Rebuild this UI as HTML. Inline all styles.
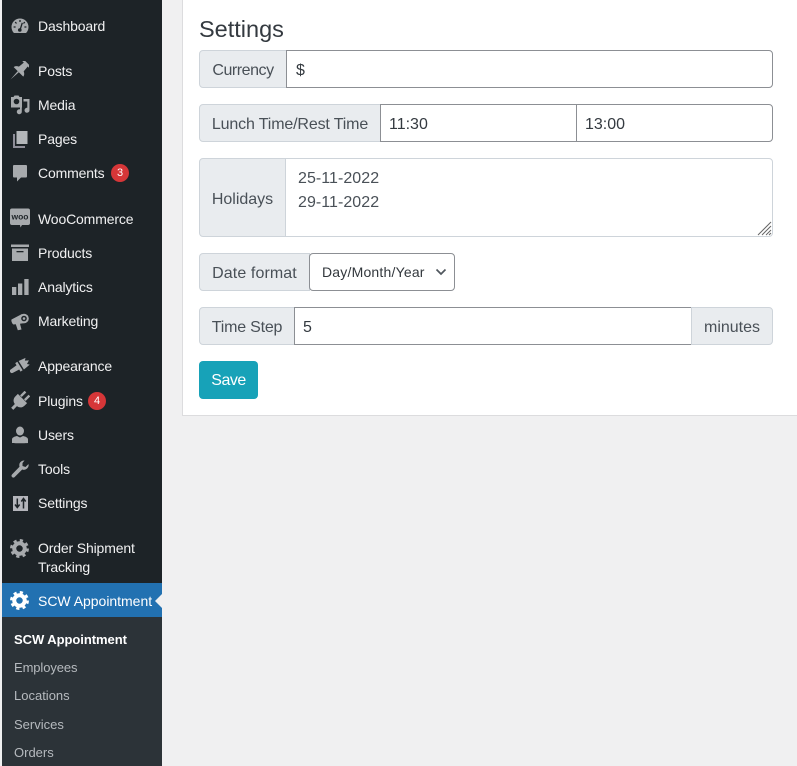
<!DOCTYPE html>
<html><head><meta charset="utf-8"><title>Settings</title>
<style>
html,body{margin:0;padding:0;width:797px;height:766px;overflow:hidden;background:#f0f0f1;font-family:"Liberation Sans",sans-serif}
.a{position:absolute;box-sizing:border-box}
#side{left:2px;top:0;width:160px;height:766px;background:#1d2327}
#sub{left:2px;top:617px;width:160px;height:149px;background:#2c3338}
#act{left:2px;top:583px;width:160px;height:34px;background:#2271b1}
#arr{left:155px;top:593px;width:0;height:0;border:8px solid transparent;border-right-color:#f0f0f1;border-left:0}
.m{position:absolute;left:38px;font-size:14px;line-height:20px;height:20px;color:#f0f0f1;white-space:nowrap;letter-spacing:-.15px}
.s{position:absolute;left:14px;font-size:13px;line-height:20px;height:20px;color:#b6babe;white-space:nowrap;letter-spacing:0}
.b{position:absolute;width:18px;height:18px;border-radius:9px;background:#d63638;color:#fff;font-size:11px;line-height:18px;text-align:center}
svg.i{position:absolute;width:20px;height:20px;fill:#a7aaad}
#panel{left:182px;top:-1px;width:616px;height:417px;background:#fff;border:1px solid #dcdcde}
h1{position:absolute;margin:0;left:199px;top:14px;font-size:23.5px;line-height:30px;font-weight:400;color:#343a40}
.add{position:absolute;box-sizing:border-box;background:#e9ecef;border:1px solid #ced4da;color:#495057;font-size:16px;display:flex;align-items:center;justify-content:center;white-space:nowrap;padding-top:4px}
.inp{position:absolute;box-sizing:border-box;background:#fff;border:1px solid #8c8f94;color:#343a40;font-size:16px;line-height:40px;white-space:nowrap}
.l{border-radius:4px 0 0 4px}.r{border-radius:0 4px 4px 0}
#btn{left:199px;top:361px;width:59px;height:38px;background:#17a2b8;border-radius:4px;color:#fff;font-size:16px;line-height:40px;text-align:center;letter-spacing:-.5px}
</style></head><body>
<div class="a" id="side"></div><div class="a" id="sub"></div><div class="a" id="act"></div><div class="a" id="arr"></div>

<svg class="i" style="left:10px;top:16px" viewBox="0 0 20 20"><path d="M10 2.500a8.500 8.500 0 0 0-8.500 8.500c0 2.300.9 4.400 2.400 6h12.200a8.500 8.500 0 0 0 2.400-6A8.500 8.500 0 0 0 10 2.500z"/><path d="M10 4v2M5.200 6l1.300 1.500M14.800 6l-1.300 1.500M3.600 11h2M14.400 11h2M12.300 6.800l-2 6.400" stroke="#1d2327" stroke-width="1.300" fill="none"/><circle cx="9.800" cy="14" r="1.800" fill="#1d2327"/></svg>
<div class="m" style="top:16px">Dashboard</div>

<svg class="i" style="left:9px;top:61px" viewBox="0 0 20 20"><g transform="rotate(45 10 10)"><path d="M5.500 -1.500h9v2.200h-1.500l.6 6.300c1.800.7 3.200 2 3.400 4H3.500c.2-2 1.600-3.300 3.400-4l.6-6.300H5.500z"/><path d="M9.200 11h1.600l-.8 11z"/></g></svg>
<div class="m" style="top:61px">Posts</div>

<svg class="i" style="left:10px;top:95px" viewBox="0 0 20 20"><path d="M1 2h2.500l1-1.500h4l1 1.500h2.500v10.500H1z"/><circle cx="6.500" cy="6.500" r="2.800" fill="#1d2327"/><path d="M13.500 4h6v11.200a2.500 2.500 0 1 1-2.200-2.400V6.500h-3.800z"/><path d="M10 11.500h1.800v5.200a2.500 2.500 0 1 1-1.800-2.400z"/></svg>
<div class="m" style="top:95px">Media</div>

<svg class="i" style="left:10px;top:129px" viewBox="0 0 20 20"><path d="M6.500 2h11v13h-11z" fill="#b4b7ba"/><path d="M3 5h2v12h10v2H3z" fill="#8f8e99"/></svg>
<div class="m" style="top:129px">Pages</div>

<svg class="i" style="left:10px;top:163px" viewBox="0 0 20 20"><path d="M4 2h12a1 1 0 0 1 1 1v10.500a1 1 0 0 1-1 1h-5l-4 4 0-4H4a1 1 0 0 1-1-1V3a1 1 0 0 1 1-1z"/></svg>
<div class="m" style="top:163px">Comments</div>
<div class="b" style="left:111px;top:164px">3</div>

<svg class="i" style="left:10px;top:208px" viewBox="0 0 20 20"><path d="M2 0.500h16a2 2 0 0 1 2 2v12.500a2 2 0 0 1-2 2h-6l-1.500 2.500L10 17H2a2 2 0 0 1-2-2V2.500a2 2 0 0 1 2-2z"/><text x="10" y="11.500" font-size="8.500" font-weight="700" text-anchor="middle" fill="#1d2327" font-family="Liberation Sans">woo</text></svg>
<div class="m" style="top:209px">WooCommerce</div>

<svg class="i" style="left:10px;top:243px" viewBox="0 0 20 20"><path d="M1 1.500h18v2.500H1zM2 5.500h16V18H2z"/><path d="M6.500 8h7v1.300h-7z" fill="#1d2327"/></svg>
<div class="m" style="top:243px">Products</div>

<svg class="i" style="left:10px;top:277px" viewBox="0 0 20 20"><path d="M2 10h4.300v8H2zM8 6.500h4.300V18H8zM14.300 2h4.300v16h-4.300z"/></svg>
<div class="m" style="top:277px">Analytics</div>

<svg class="i" style="left:10px;top:311px" viewBox="0 0 20 20"><path d="M1.500 8.500L12 3l3 9-5 .7 1.500 5.800-3.700.8-2-6.100-2.300.3c-1.500-.8-2.500-3.700-2-5z"/><circle cx="14" cy="7.500" r="4.800"/><circle cx="14" cy="7.500" r="2.800" fill="#1d2327"/><circle cx="14" cy="7.500" r="1.300"/></svg>
<div class="m" style="top:311px">Marketing</div>

<svg class="i" style="left:10px;top:356px" viewBox="0 0 20 20"><g transform="rotate(58 10 10)"><path d="M5 8.500L6 1l2 2 2-3.500 2 3.500 2-2 1 7.500z"/><path d="M5 10h10v2.500h-2.500l-.5 7a2 2 0 0 1-4 0l-.5-7H5z"/></g></svg>
<div class="m" style="top:356px">Appearance</div>

<svg class="i" style="left:10px;top:391px" viewBox="0 0 20 20"><g transform="rotate(45 10 10)"><path d="M6 -.500h2.400V6H6zM11.600 -.500H14V6h-2.400z"/><path d="M3.500 6.500h13v3.500c0 3.300-2.200 5.500-5 5.800V21h-3v-5.200c-2.800-.3-5-2.500-5-5.800z"/></g></svg>
<div class="m" style="top:391px">Plugins</div>
<div class="b" style="left:88px;top:392px">4</div>

<svg class="i" style="left:10px;top:425px" viewBox="0 0 20 20"><ellipse cx="10" cy="6" rx="4" ry="4.500"/><path d="M2 18v-3.500c0-2 2.500-3 5-3.500l3 1.500 3-1.500c2.500.5 5 1.500 5 3.500V18c0 .3-16 .3-16 0z"/></svg>
<div class="m" style="top:425px">Users</div>

<svg class="i" style="left:10px;top:459px" viewBox="0 0 20 20"><path d="M14.500 1.500a4.800 4.800 0 0 0-5 6.300L2 15.500a2 2 0 0 0 0 2.500 2 2 0 0 0 2.700 0l7.500-7.500a4.800 4.800 0 0 0 6.300-5.500l-3 3-3-1 0-3z"/></svg>
<div class="m" style="top:459px">Tools</div>

<svg class="i" style="left:10px;top:493px" viewBox="0 0 20 20"><path d="M3 3h15v15H3z" fill="#b4b5bb"/><path d="M7.300 5.500v9M5 11.500l2.300 3 2.300-3M13.500 15.500v-10M11.300 8.500l2.200-3 2.200 3" stroke="#1d2327" stroke-width="1.500" fill="none"/></svg>
<div class="m" style="top:493px">Settings</div>

<svg class="i" style="left:9px;top:538px;width:21px;height:21px" viewBox="0 0 20 20"><circle cx="10" cy="10" r="7.200" fill="none" stroke="#a7aaad" stroke-width="3.600" stroke-dasharray="2.830 2.830"/><circle cx="10" cy="10" r="5" fill="none" stroke="#a7aaad" stroke-width="3.800"/></svg>
<div class="m" style="top:538px">Order Shipment</div>
<div class="m" style="top:557px">Tracking</div>

<svg class="i" style="left:9px;top:590px;width:21px;height:21px" viewBox="0 0 20 20"><circle cx="10" cy="10" r="7.200" fill="none" stroke="#fff" stroke-width="3.600" stroke-dasharray="2.830 2.830"/><circle cx="10" cy="10" r="5" fill="none" stroke="#fff" stroke-width="3.800"/></svg>
<div class="m" style="top:591px;color:#fff;letter-spacing:-.02px">SCW Appointment</div>

<div class="s" style="top:630px;color:#fff;font-weight:700;letter-spacing:-.05px">SCW Appointment</div>
<div class="s" style="top:658px;letter-spacing:-.1px">Employees</div>
<div class="s" style="top:686px">Locations</div>
<div class="s" style="top:715px">Services</div>
<div class="s" style="top:743px">Orders</div>

<div class="a" id="panel"></div>
<h1>Settings</h1>

<div class="add l" style="left:199px;top:50px;width:88px;height:38px;letter-spacing:-.45px">Currency</div>
<div class="inp r" style="left:286px;top:50px;width:487px;height:38px;padding-left:9px">$</div>

<div class="add l" style="left:199px;top:104px;width:182px;height:38px;letter-spacing:-.15px">Lunch Time/Rest Time</div>
<div class="inp" style="left:380px;top:104px;width:197px;height:38px;padding-left:8px">11:30</div>
<div class="inp r" style="left:576px;top:104px;width:197px;height:38px;padding-left:8px">13:00</div>

<div class="add l" style="left:199px;top:158px;width:87px;height:79px">Holidays</div>
<div class="inp r" style="left:285px;top:158px;width:488px;height:79px;border-color:#ced4da;padding:8px 12px;line-height:24px;color:#495057;letter-spacing:.05px">25-11-2022<br>29-11-2022
<svg style="position:absolute;right:0;bottom:0" width="16" height="16" viewBox="0 0 16 16"><path d="M2 15L15 2M6 15L15 6M10 15l5-5M13 15l2-2" stroke="#666" stroke-width="1" fill="none"/></svg></div>

<div class="add l" style="left:199px;top:253px;width:111px;height:38px;letter-spacing:.1px">Date format</div>
<div class="inp" style="left:309px;top:253px;width:146px;height:38px;border-radius:4px;padding-left:12px;font-size:14px;color:#32373c;line-height:37px;letter-spacing:.2px">Day/Month/Year
<svg style="position:absolute;left:124px;top:12px" width="14" height="12" viewBox="0 0 14 12"><path d="M2.500 3.500L7 8l4.500-4.500" stroke="#50575e" stroke-width="1.700" fill="none"/></svg></div>

<div class="add l" style="left:199px;top:307px;width:96px;height:38px;letter-spacing:-.2px">Time Step</div>
<div class="inp" style="left:294px;top:307px;width:398px;height:38px;padding-left:8px">5</div>
<div class="add r" style="left:691px;top:307px;width:82px;height:38px">minutes</div>

<div class="a" id="btn">Save</div>
</body></html>
